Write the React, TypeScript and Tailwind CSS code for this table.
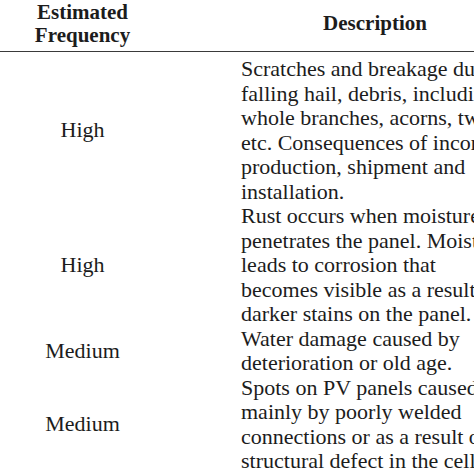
const rows = [
  {
    freq: 'High',
    lines: [
      'Scratches and breakage due to',
      'falling hail, debris, including',
      'whole branches, acorns, twigs,',
      'etc. Consequences of incorrect',
      'production, shipment and',
      'installation.',
    ],
  },
  {
    freq: 'High',
    lines: [
      'Rust occurs when moisture',
      'penetrates the panel. Moisture',
      'leads to corrosion that',
      'becomes visible as a result of',
      'darker stains on the panel.',
    ],
  },
  {
    freq: 'Medium',
    lines: ['Water damage caused by', 'deterioration or old age.'],
  },
  {
    freq: 'Medium',
    lines: [
      'Spots on PV panels caused',
      'mainly by poorly welded',
      'connections or as a result of a',
      'structural defect in the cell.',
    ],
  },
]

export default function App() {
  return (
    <div
      className="h-[474px] w-[474px] overflow-hidden bg-white text-[#1c1c1c]"
      style={{ fontFamily: '"Liberation Serif", "Times New Roman", serif' }}
    >
      <div className="w-[560px]">
        <div className="grid grid-cols-[241px_268px] border-b-[1.5px] border-[#3a3a3a] pt-[1px] pb-[5px] text-[21px] font-bold leading-[22.5px]">
          <div className="pr-[76px] text-center">
            <div>Estimated</div>
            <div>Frequency</div>
          </div>
          <div className="flex items-center justify-center">Description</div>
        </div>
        <div className="pt-[5px] text-[22px] leading-[24.5px]">
          {rows.map((row, i) => (
            <div key={i} className="grid grid-cols-[241px_1fr]">
              <div className="flex items-center justify-center pr-[76px]">{row.freq}</div>
              <div>
                {row.lines.map((line, j) => (
                  <div key={j} className="whitespace-nowrap">
                    {line}
                  </div>
                ))}
              </div>
            </div>
          ))}
        </div>
      </div>
    </div>
  )
}
